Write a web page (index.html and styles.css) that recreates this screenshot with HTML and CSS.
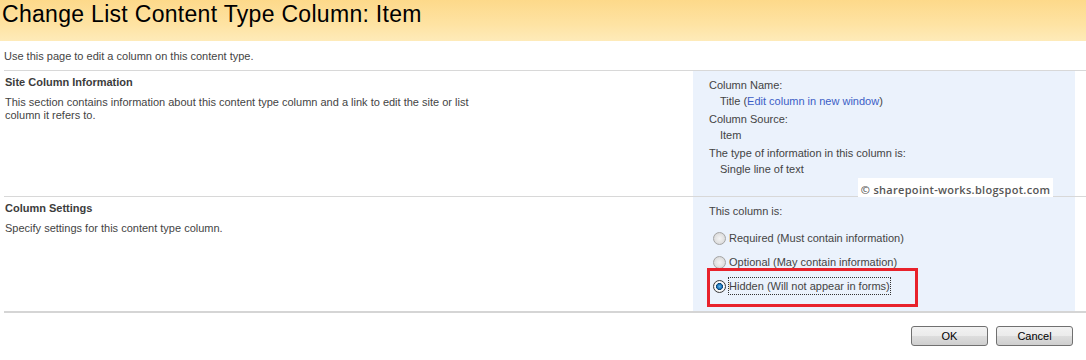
FILE: index.html
```html
<!DOCTYPE html>
<html>
<head>
<meta charset="utf-8">
<title>Change List Content Type Column</title>
<link rel="stylesheet" href="styles.css">
</head>
<body>
<div class="titlebar"><h1 class="title">Change List Content Type Column: Item</h1></div>
<div class="intro">Use this page to edit a column on this content type.</div>

<div class="section">
  <div class="desc">
    <h3 class="head">Site Column Information</h3>
    <p class="text">This section contains information about this content type column and a link to edit the site or list column it refers to.</p>
  </div>
  <div class="ctrl ctrl-info">
    <div class="group">
      <div class="label">Column Name:</div>
      <div class="value">Title (<a class="link" href="#">Edit column in new window</a>)</div>
    </div>
    <div class="group">
      <div class="label">Column Source:</div>
      <div class="value">Item</div>
    </div>
    <div class="group">
      <div class="label">The type of information in this column is:</div>
      <div class="value">Single line of text</div>
    </div>
    <div class="watermark">© sharepoint-works.blogspot.com</div>
  </div>
  <div class="gutter"></div>
</div>

<div class="section section-last">
  <div class="desc">
    <h3 class="head">Column Settings</h3>
    <p class="text">Specify settings for this content type column.</p>
  </div>
  <div class="ctrl ctrl-settings">
    <div class="label">This column is:</div>
    <div class="radios">
      <label class="radio"><input type="radio" name="status"><span>Required (Must contain information)</span></label>
      <label class="radio"><input type="radio" name="status"><span>Optional (May contain information)</span></label>
      <label class="radio"><input type="radio" name="status" checked><span class="focused">Hidden (Will not appear in forms)</span></label>
    </div>
    <div class="highlight"></div>
  </div>
  <div class="gutter"></div>
</div>

<div class="buttons">
  <button class="btn">OK</button>
  <button class="btn">Cancel</button>
</div>
</body>
</html>
```
FILE: styles.css
```css
html, body {
  margin: 0;
  padding: 0;
  background: #ffffff;
}
body {
  font-family: "Liberation Sans", Arial, sans-serif;
  font-size: 11px;
  color: #444444;
  width: 1086px;
}
.titlebar {
  height: 41px;
  background: linear-gradient(to bottom, #fdd98a 0%, #fee3a3 60%, #feebb9 100%);
  padding: 0 0 0 2px;
  box-sizing: border-box;
}
.title {
  margin: 0;
  font-family: "Liberation Sans", Arial, sans-serif;
  font-weight: normal;
  font-size: 23px;
  line-height: 28px;
  color: #000000;
  letter-spacing: 0.3px;
}
.intro {
  padding: 9px 0 0 4px;
  height: 20px;
  line-height: 13px;
}
.section {
  margin-left: 4px;
  border-top: 1px solid #d8d8d8;
  display: grid;
  grid-template-columns: 689px 382px 11px;
}
.section-last {
  border-bottom: 2px solid #d5d5d5;
}
.desc {
  padding: 5px 0 0 1px;
}
.head {
  margin: 0;
  font-size: 11px;
  font-weight: bold;
  line-height: 13px;
  color: #3c3c3c;
}
.text {
  margin: 7px 0 0 0;
  max-width: 466px;
  line-height: 13px;
}
.ctrl {
  background: #ebf2fc;
  position: relative;
  padding-left: 16px;
}
.ctrl-info {
  height: 125px;
  padding-top: 6px;
  box-sizing: border-box;
}
.group {
  margin-bottom: 2px;
}
.label {
  line-height: 16px;
}
.value {
  line-height: 16px;
  padding-left: 11px;
}
.link {
  color: #3b5ec6;
  text-decoration: none;
}
.watermark {
  position: absolute;
  left: 165px;
  top: 107px;
  width: 195px;
  height: 24px;
  background: #ffffff;
  color: #555555;
  font-family: "Open Sans", "Liberation Sans", sans-serif;
  font-weight: 600;
  font-size: 11px;
  line-height: 24px;
  text-align: center;
  letter-spacing: 0.3px;
}
.ctrl-settings {
  height: 114px;
  padding-top: 6px;
  box-sizing: border-box;
}
.radios {
  margin-top: 11px;
  display: flex;
  flex-direction: column;
  gap: 8px;
}
.radio {
  display: flex;
  align-items: center;
  gap: 3px;
  height: 16px;
  line-height: 16px;
}
.radio input {
  appearance: none;
  -webkit-appearance: none;
  margin: 0 0 0 4px;
  width: 13px;
  height: 13px;
  border-radius: 50%;
  border: 1px solid #a4a4a4;
  background: radial-gradient(circle at 50% 50%, #f4f4f4 0%, #e2e2e2 55%, #d0d0d0 100%);
  box-sizing: border-box;
  position: relative;
}
.radio input:checked {
  border-color: #3a3a3a;
  background: radial-gradient(circle at 50% 50%, #6ab8ea 0%, #1a73b8 30%, #0a3f6e 42%, #ffffff 48%, #ececec 75%, #d8d8d8 100%);
}
.focused {
  outline: 1px dotted #333333;
  outline-offset: 0;
}
.highlight {
  position: absolute;
  left: 14px;
  top: 71px;
  width: 211px;
  height: 39px;
  border: 3px solid #e8222b;
  box-sizing: border-box;
  pointer-events: none;
}
.buttons {
  display: flex;
  justify-content: flex-end;
  gap: 8px;
  padding: 13px 13px 0 0;
}
.btn {
  width: 77px;
  height: 20px;
  font-family: "Liberation Sans", Arial, sans-serif;
  font-size: 11px;
  color: #000000;
  border: 1px solid #707070;
  border-radius: 3px;
  background: linear-gradient(to bottom, #f2f2f2 0%, #ebebeb 50%, #dddddd 51%, #cfcfcf 100%);
  padding: 0;
}
```
